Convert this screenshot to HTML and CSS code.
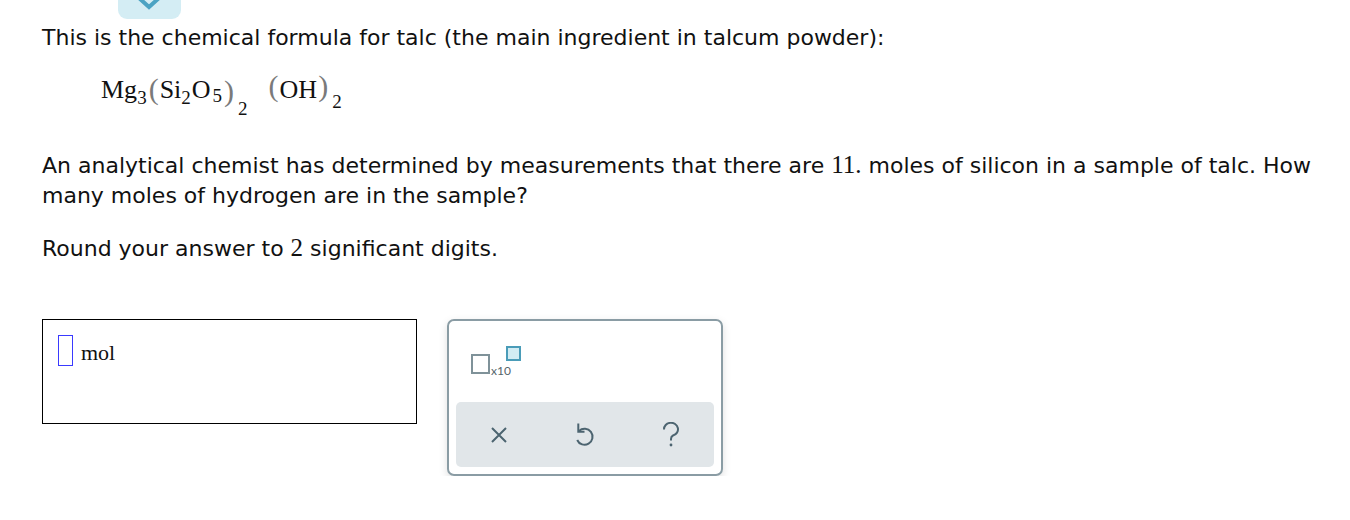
FILE: index.html
```html
<!DOCTYPE html>
<html>
<head>
<meta charset="utf-8">
<link rel="stylesheet" href="styles.css">
</head>
<body>
<div class="tab-row">
  <div class="tab">
    <svg class="chev" width="24" height="10" viewBox="0 0 24 10"><path d="M2 -2 L12 7 L22 -2" fill="none" stroke="#4ba3c3" stroke-width="4"/></svg>
  </div>
</div>
<div class="content">
  <p class="p1">This is the chemical formula for talc (the main ingredient in talcum powder):</p>
  <div class="formula">Mg<span class="sb s3">3</span><span class="pr pl1">(</span>Si<span class="sb s2">2</span>O<span class="sb s5">5</span><span class="pr pr1">)</span><span class="sb slow">2</span><span class="pr pl2">(</span>OH<span class="pr pr2">)</span><span class="sb smid">2</span></div>
  <p class="p2">An analytical chemist has determined by measurements that there are <span class="num">11.</span> moles of silicon in a sample of talc. How many moles of hydrogen are in the sample?</p>
  <p class="p3">Round your answer to <span class="num">2</span> significant digits.</p>
  <div class="answer-row">
    <div class="answer-box">
      <span class="slot"></span>
      <span class="unit">mol</span>
    </div>
    <div class="keypad">
      <div class="sci">
        <span class="sq-big"></span><span class="x10">x10</span><span class="sq-small"></span>
      </div>
      <div class="actions">
        <div class="act">
          <svg width="18" height="18" viewBox="0 0 18 18"><path d="M2 2 L16 16 M16 2 L2 16" stroke="#4c6470" stroke-width="2" fill="none"/></svg>
        </div>
        <div class="act">
          <svg width="22" height="25" viewBox="0 0 22 25"><path d="M4.3 1.5 V9.8 H10.5" fill="none" stroke="#4c6470" stroke-width="2" stroke-linejoin="miter"/><path d="M5 9 A8 8 0 1 1 3.2 18" fill="none" stroke="#4c6470" stroke-width="2"/></svg>
        </div>
        <div class="act">
          <svg width="20" height="26" viewBox="0 0 20 26"><path d="M3 7.5 A7 6.5 0 1 1 12 13.5 Q10 14.5 10 17 V18.5" fill="none" stroke="#4c6470" stroke-width="2"/><circle cx="10" cy="23" r="1.4" fill="#4c6470"/></svg>
        </div>
      </div>
    </div>
  </div>
</div>
</body>
</html>
```
FILE: styles.css
```css
html, body {
  margin: 0;
  padding: 0;
  background: #fff;
}
body {
  font-family: "DejaVu Sans", Verdana, sans-serif;
  color: #111;
}
.tab-row {
  height: 19px;
  padding-left: 118px;
}
.tab {
  width: 63px;
  height: 19px;
  background: #d4edf4;
  border-radius: 0 0 9px 9px;
  display: flex;
  justify-content: center;
  align-items: flex-start;
}
.chev {
  display: block;
  margin-left: -1px;
}
.content {
  padding-left: 42px;
  width: 1290px;
}
.p1, .p2, .p3 {
  margin: 0;
  font-size: 22px;
  line-height: 30px;
}
.p1 {
  margin-top: 4px;
}
.formula {
  font-family: "Liberation Serif", "Times New Roman", serif;
  font-size: 26px;
  line-height: 30px;
  height: 30px;
  margin-top: 22px;
  padding-left: 59px;
  color: #111;
  white-space: nowrap;
}
.sb {
  font-family: "Liberation Serif", "Times New Roman", serif;
  font-size: 19px;
  line-height: 0;
}
.s3 { vertical-align: -6px; margin-right: 1px; }
.s2 { vertical-align: -6px; margin-right: 1px; }
.s5 { vertical-align: -4px; margin-left: 2px; margin-right: 1px; }
.slow { vertical-align: -17px; margin-left: 3px; margin-right: 20px; }
.smid { vertical-align: -10px; margin-left: 3px; }
.pr {
  font-size: 30px;
  line-height: 0;
  color: #7a7a7a;
  margin: 0 1px;
}
.pl1 { vertical-align: -1px; }
.pr1 { vertical-align: -3px; }
.pl2 { vertical-align: 2px; }
.pr2 { vertical-align: 2px; }
.p2 {
  margin-top: 46px;
}
.p3 {
  margin-top: 23px;
}
.num {
  font-family: "Liberation Serif", "Times New Roman", serif;
  font-size: 25px;
  line-height: 1;
}
.answer-row {
  margin-top: 55px;
  display: flex;
  align-items: flex-start;
  gap: 30px;
}
.answer-box {
  border: 1px solid #000;
  display: flex;
  align-items: flex-start;
  padding: 15px 0 0 15px;
  height: 88px;
  width: 358px;
}
.slot {
  width: 13px;
  height: 29px;
  border: 1.5px solid #3a3aff;
  display: block;
}
.unit {
  font-family: "Liberation Serif", "Times New Roman", serif;
  font-size: 22px;
  line-height: 22px;
  margin-left: 8px;
  margin-top: 7px;
  color: #111;
}
.keypad {
  border: 2px solid #8a9ca4;
  border-radius: 7px;
  box-shadow: 0 3px 9px rgba(0,0,0,0.13);
  padding: 0 7px 7px 7px;
  box-sizing: border-box;
  width: 276px;
  height: 157px;
  display: flex;
  flex-direction: column;
  justify-content: space-between;
}
.sci {
  display: flex;
  align-items: flex-start;
  padding-left: 15px;
  padding-top: 24px;
  height: 56px;
  box-sizing: border-box;
}
.sq-big {
  display: block;
  width: 15px;
  height: 16px;
  border: 2px solid #7f9299;
  margin-top: 9px;
}
.x10 {
  font-family: "Lato", "Open Sans", sans-serif;
  font-size: 12px;
  line-height: 12px;
  margin-top: 20px;
  margin-left: 1px;
  color: #55646a;
}
.sq-small {
  display: block;
  width: 11px;
  height: 11px;
  border: 2px solid #4a9cb8;
  background: #d2ecf3;
  margin-left: -5px;
  margin-top: 1px;
}
.actions {
  height: 65px;
  background: #e1e6e9;
  border-radius: 5px;
  display: flex;
}
.act {
  flex: 1;
  display: flex;
  align-items: center;
  justify-content: center;
}
.act svg {
  display: block;
}
```
